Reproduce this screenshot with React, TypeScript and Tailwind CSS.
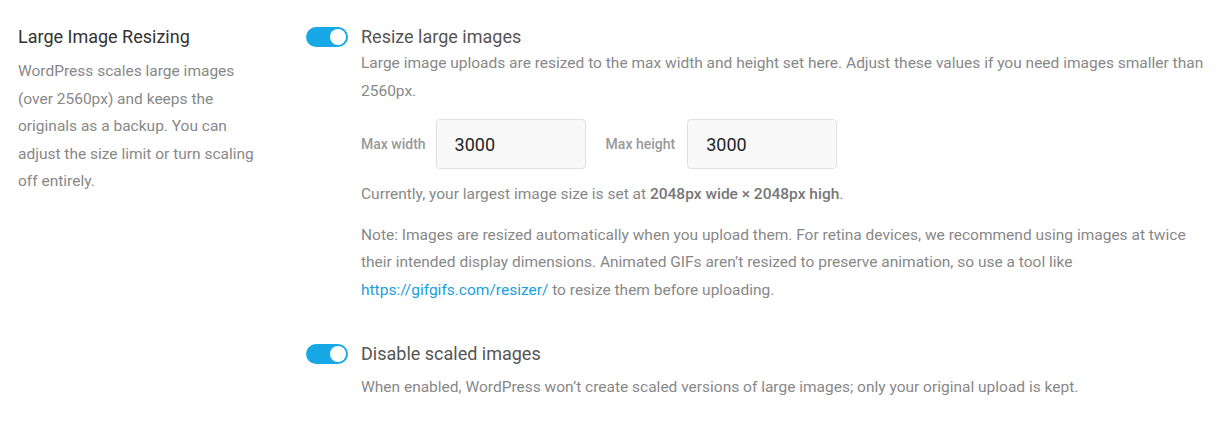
import React from 'react'

function Toggle() {
  return (
    <div className="w-[42px] h-[20px] rounded-full bg-[#17a8e5] flex items-center justify-end pr-[2px] shrink-0">
      <div className="w-[16px] h-[16px] rounded-full bg-white" />
    </div>
  )
}

export default function App() {
  return (
    <div
      className="w-[1220px] h-[432px] bg-white flex pt-[24px]"
      style={{ fontFamily: 'Roboto, "Liberation Sans", sans-serif' }}
    >
      {/* Left description column */}
      <div className="w-[306px] pl-[18px] shrink-0">
        <h3 className="text-[18px] leading-[26px] font-normal text-[#333]">Large Image Resizing</h3>
        <p className="mt-[8px] text-[15.5px] leading-[27.5px] text-[#888] w-[245px]">
          WordPress scales large images (over 2560px) and keeps the originals as a backup. You can adjust the size limit or turn scaling off entirely.
        </p>
      </div>

      {/* Right settings column */}
      <div className="flex-1 pr-[6px]">
        <div className="flex items-start gap-[13px]">
          <div className="pt-[3px]">
            <Toggle />
          </div>
          <div className="flex-1">
            <div className="text-[18px] leading-[26px] font-normal text-[#555]">Resize large images</div>
            <p className="text-[15.5px] leading-[27.5px] text-[#888]">
              Large image uploads are resized to the max width and height set here. Adjust these values if you need images smaller than 2560px.
            </p>
            <div className="flex items-center mt-[14px]">
              <label className="text-[14px] font-medium text-[#999] mr-[10px]">Max width</label>
              <input
                defaultValue="3000"
                className="w-[150px] h-[50px] rounded-[4px] border border-[#e0e0e0] bg-[#f9f9f9] px-[18px] text-[18px] text-[#222] outline-none"
              />
              <label className="text-[14px] font-medium text-[#999] ml-[20px] mr-[12px]">Max height</label>
              <input
                defaultValue="3000"
                className="w-[150px] h-[50px] rounded-[4px] border border-[#e0e0e0] bg-[#f9f9f9] px-[18px] text-[18px] text-[#222] outline-none"
              />
            </div>
            <p className="mt-[12px] text-[15.5px] leading-[27.5px] text-[#888]">
              Currently, your largest image size is set at <span className="font-medium text-[#777]">2048px wide × 2048px high</span>.
            </p>
            <p className="mt-[13px] text-[15.5px] leading-[27.5px] text-[#888]">
              Note: Images are resized automatically when you upload them. For retina devices, we recommend using images at twice their intended display dimensions. Animated GIFs aren’t resized to preserve animation, so use a tool like{' '}
              <a href="#" className="text-[#1a9fe0]">https://gifgifs.com/resizer/</a> to resize them before uploading.
            </p>
          </div>
        </div>

        <div className="flex items-start gap-[13px] mt-[37px]">
          <div className="pt-[3px]">
            <Toggle />
          </div>
          <div className="flex-1">
            <div className="text-[18px] leading-[26px] font-normal text-[#555]">Disable scaled images</div>
            <p className="mt-[7px] text-[15.5px] leading-[27.5px] text-[#888]">
              When enabled, WordPress won’t create scaled versions of large images; only your original upload is kept.
            </p>
          </div>
        </div>
      </div>
    </div>
  )
}
